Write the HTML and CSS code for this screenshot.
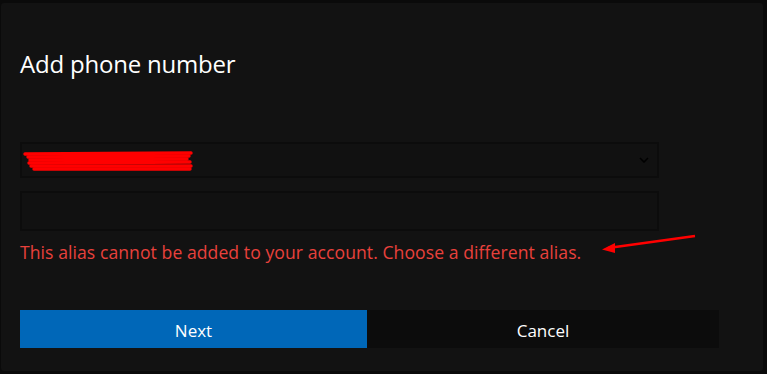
FILE: index.html
```html
<!DOCTYPE html>
<html lang="en">
  <head>
    <meta charset="UTF-8" />
    <meta name="viewport" content="width=device-width, initial-scale=1.0" />
    <title>Add phone number</title>
    <link rel="stylesheet" href="styles.css">
  </head>
  <body>
    <div class="dialog">
      <h1 class="title">Add phone number</h1>

      <div class="fields">
        <div class="select-box">
          <svg class="redacted" width="170" height="22" viewBox="0 0 170 22">
            <g stroke="#f00" stroke-width="3.4" stroke-linecap="round">
              <path d="M2 3 L168 2" />
              <path d="M5 6 L166 5" />
              <path d="M7 9 L164 8" />
              <path d="M6 12 L167 11" />
              <path d="M8 15 L168 15" />
              <path d="M11 18 L167 18" />
            </g>
          </svg>
          <svg class="chevron" width="10" height="6" viewBox="0 0 10 6">
            <path d="M1 1 L5 5 L9 1" fill="none" stroke="#000" stroke-width="1.6" />
          </svg>
        </div>
        <div class="text-box"></div>
        <div class="error-row">
          <p class="error">This alias cannot be added to your account. Choose a different alias.</p>
          <svg class="arrow" width="100" height="20" viewBox="0 0 100 20">
            <path d="M8 15 L95 3" stroke="#f00" stroke-width="2.5" />
            <path d="M2 16.5 L15 10 L15 20 Z" fill="#f00" />
          </svg>
        </div>
      </div>

      <div class="buttons">
        <button type="button" class="btn btn-primary">Next</button>
        <button type="button" class="btn btn-secondary">Cancel</button>
      </div>
    </div>
  </body>
</html>
```

FILE: styles.css
```css
body {
  margin: 0;
  padding: 3px 4px 3px 1px;
  background-color: #0a0a0a;
  font-family: "Open Sans", "Noto Sans", sans-serif;
  color: #fff;
  height: 374px;
  box-sizing: border-box;
}

.dialog {
  background-color: #121212;
  border-radius: 3px;
  height: 100%;
  box-sizing: border-box;
  padding: 0 43px 0 19px;
  display: flex;
  flex-direction: column;
}

.title {
  margin: 45px 0 0 0;
  font-size: 24px;
  font-weight: 400;
  line-height: 32px;
  letter-spacing: -0.2px;
}

.fields {
  margin-top: 62px;
  width: 639px;
}

.select-box,
.text-box {
  box-sizing: border-box;
  border: 2px solid #0c0c0c;
  background-color: #111;
}

.select-box {
  height: 36px;
  display: flex;
  align-items: center;
  justify-content: space-between;
  padding: 0 8px 0 1px;
}

.redacted {
  display: block;
  margin-top: 3px;
}

.text-box {
  height: 40px;
  margin-top: 13px;
}

.error-row {
  position: relative;
  margin-top: 9px;
}

.error {
  margin: 0;
  font-size: 17.6px;
  line-height: 24px;
  color: #e8413c;
  letter-spacing: 0.06px;
}

.arrow {
  position: absolute;
  left: 580px;
  top: -7px;
}

.buttons {
  margin-top: 46px;
  display: flex;
  width: 699px;
}

.btn {
  height: 38px;
  border: none;
  font-family: inherit;
  font-size: 17px;
  color: #fff;
  padding: 2px 0 0 0;
}

.btn-primary {
  width: 347px;
  background-color: #0067b8;
}

.btn-secondary {
  flex: 1;
  background-color: #0c0c0c;
}
```
